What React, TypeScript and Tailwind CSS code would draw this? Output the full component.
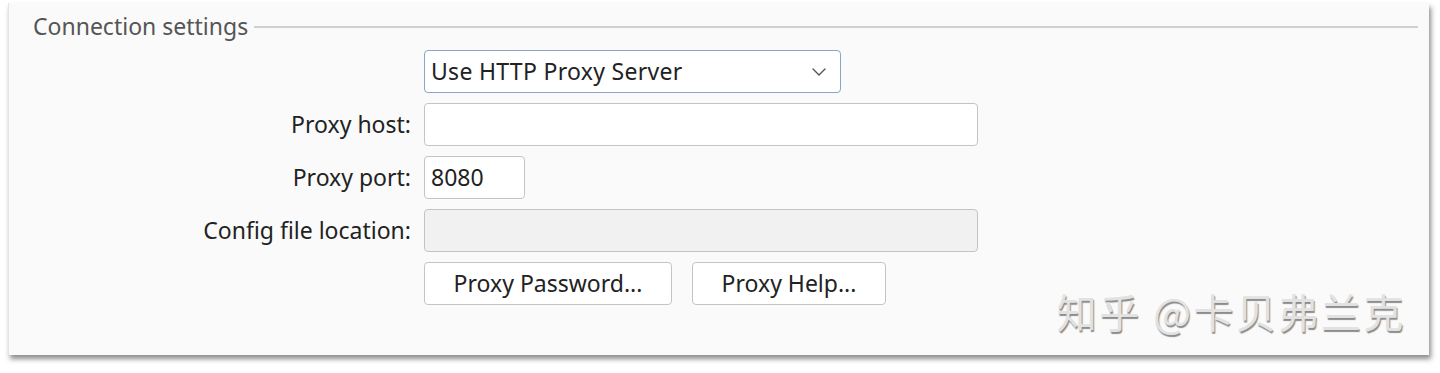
import { ChevronDown } from "lucide-react";

const FONT = "font-['Noto_Sans','Liberation_Sans',sans-serif]";

function Label({ children }: { children: string }) {
  return <div className="flex h-[43px] items-center justify-end text-[23px] text-[#222]">{children}</div>;
}

function Field({ className, value }: { className: string; value?: string }) {
  return (
    <div className={`flex h-[43px] items-center rounded-[4px] border border-[#c4c4c4] px-[6px] text-[23px] text-[#222] ${className}`}>
      {value}
    </div>
  );
}

function Button({ label, width }: { label: string; width: string }) {
  return (
    <div className={`flex h-[43px] items-center justify-center rounded-[4px] border border-[#c4c4c4] bg-white text-[23px] text-[#222] ${width}`}>
      {label}
    </div>
  );
}

export default function App() {
  return (
    <div className={`h-[373px] w-[1440px] bg-white pl-[8px] pt-[3px] ${FONT}`}>
      <div className="relative h-[352px] w-[1421px] border-l border-[#e4e4e4] bg-[#fafafa] shadow-[2px_4px_5px_rgba(0,0,0,0.45)]">
        <div className="flex h-[44px] items-center gap-[6px] pl-[24px] pr-[11px] pt-[2px]">
          <span className="text-[23px] text-[#555]">Connection settings</span>
          <div className="mt-[2px] h-[2px] flex-1 bg-[#d0d0d0]" />
        </div>

        <div className="mt-[3px] grid grid-cols-[402px_auto] gap-x-[13px] gap-y-[10px]">
          <div />
          <div className="flex h-[43px] w-[417px] items-center justify-between rounded-[4px] border border-[#89a6c8] bg-white pl-[6px] pr-[9px] text-[23px] tracking-[0.3px] text-[#222]">
            <span>Use HTTP Proxy Server</span>
            <ChevronDown className="h-[24px] w-[24px] text-[#555]" strokeWidth={1.4} />
          </div>

          <Label>Proxy host:</Label>
          <Field className="w-[554px] bg-white" />

          <Label>Proxy port:</Label>
          <Field className="w-[101px] bg-white" value="8080" />

          <Label>Config file location:</Label>
          <Field className="w-[554px] bg-[#f1f1f1]" />

          <div />
          <div className="flex gap-[20px]">
            <Button label="Proxy Password..." width="w-[248px]" />
            <Button label="Proxy Help..." width="w-[194px]" />
          </div>
        </div>

        <div className="absolute bottom-[14px] right-[23px] font-['Noto_Sans_CJK_SC',sans-serif] text-[40px] tracking-[2.5px] text-[#e2e2e2] [text-shadow:1px_2px_1px_#8c8c8c]">
          知乎 @卡贝弗兰克
        </div>
      </div>
    </div>
  );
}
